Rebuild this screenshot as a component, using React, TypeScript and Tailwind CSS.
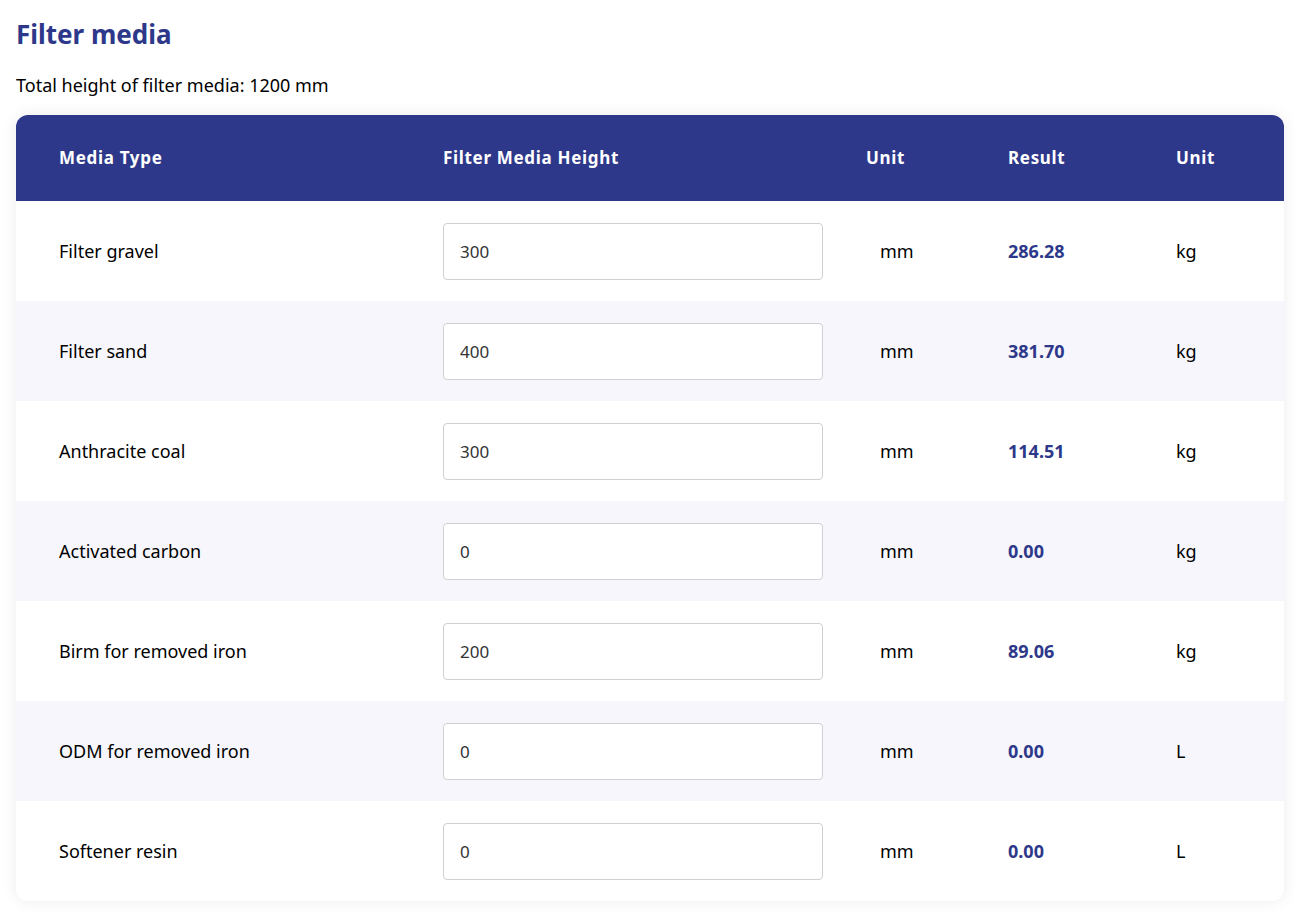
const rows = [
  { name: 'Filter gravel', h: '300', r: '286.28', u: 'kg' },
  { name: 'Filter sand', h: '400', r: '381.70', u: 'kg' },
  { name: 'Anthracite coal', h: '300', r: '114.51', u: 'kg' },
  { name: 'Activated carbon', h: '0', r: '0.00', u: 'kg' },
  { name: 'Birm for removed iron', h: '200', r: '89.06', u: 'kg' },
  { name: 'ODM for removed iron', h: '0', r: '0.00', u: 'L' },
  { name: 'Softener resin', h: '0', r: '0.00', u: 'L' },
];

const cols = 'grid grid-cols-[384px_423px_142px_168px_1fr] items-center pl-[43px]';

export default function App() {
  return (
    <div className="min-h-[915px] bg-white px-4 pt-[18px] font-['Lato',sans-serif] text-black">
      <h1 className="text-[26px] font-bold leading-8 text-[#2d388a]">Filter media</h1>
      <p className="mt-[23px] text-[18px] leading-6">Total height of filter media: 1200 mm</p>
      <div className="mt-[18px] overflow-hidden rounded-xl bg-white shadow-[0_0_16px_rgba(0,0,0,0.08)]">
        <div className={`${cols} h-[86px] bg-[#2d388a] font-['Open_Sans',sans-serif] text-[17px] font-bold tracking-[0.04em] text-white`}>
          <div>Media Type</div>
          <div>Filter Media Height</div>
          <div>Unit</div>
          <div>Result</div>
          <div>Unit</div>
        </div>
        {rows.map((row, i) => (
          <div key={row.name} className={`${cols} h-[100px] text-[18px] ${i % 2 ? 'bg-[#f6f6fc]' : 'bg-white'}`}>
            <div>{row.name}</div>
            <div>
              <input
                defaultValue={row.h}
                className="h-[57px] w-[380px] rounded-sm border border-[#cfcfd4] bg-white px-4 text-[17px] text-[#333] outline-none"
              />
            </div>
            <div className="pl-[14px]">mm</div>
            <div className="font-bold text-[#2d388a]">{row.r}</div>
            <div>{row.u}</div>
          </div>
        ))}
      </div>
    </div>
  );
}
